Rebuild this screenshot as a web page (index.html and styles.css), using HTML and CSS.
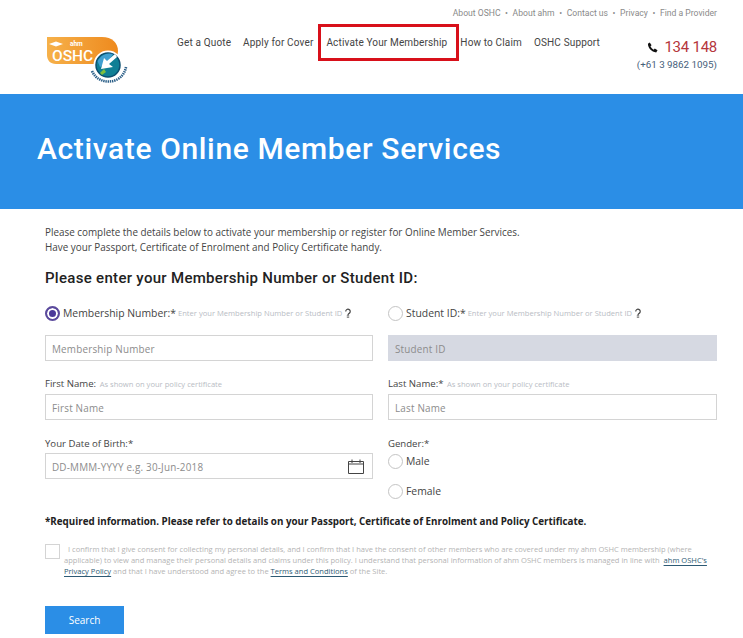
FILE: index.html
```html
<!DOCTYPE html>
<html lang="en">
<head>
<meta charset="utf-8">
<title>Activate Online Member Services</title>
<link rel="stylesheet" href="styles.css">
</head>
<body>
<header class="site-header">
  <nav class="top-links">
    <a>About OSHC</a><span>•</span><a>About ahm</a><span>•</span><a>Contact us</a><span>•</span><a>Privacy</a><span>•</span><a>Find a Provider</a>
  </nav>
  <div class="main-row">
    <svg class="logo" viewBox="0 0 84 48" width="84" height="48" aria-label="ahm OSHC">
      <defs>
        <linearGradient id="og" x1="0" x2="1" y1="0" y2="0">
          <stop offset="0" stop-color="#f6b14a"/><stop offset="1" stop-color="#ee8a1e"/>
        </linearGradient>
      </defs>
      <path d="M1 0H56C66 0 72 6 72 14C72 21 66 27 58 27H10C4 27 1 23 1 18Z" fill="url(#og)"/>
      <text x="24" y="8.500" class="logo-ahm">ahm</text>
      <text x="6" y="24" class="logo-oshc">OSHC</text>
      <path d="M3 7L10 4.500L17 7L10 9.500Z" fill="#fff"/>
      <circle cx="62" cy="28" r="14.500" fill="#fff"/>
      <circle cx="62" cy="28" r="12" fill="#0f7f95" stroke="#0b4f70" stroke-width="1.500"/>
      <path d="M51.500 24C55 18 61 15 67 17L61 26L54 30Z" fill="#3f9fd0"/>
      <path d="M54 36L58 32L60 35L56 38Z" fill="#7fbf3f"/>
      <path d="M71 20L63 27L67 30L55 32L58 21L61 24L69 17Z" fill="#fff"/>
      <path d="M46 34C50 43 60 47 70 43C75 41 79 36 80 30" fill="none" stroke="#2b5f88" stroke-width="2.600" stroke-dasharray="1.400 .8"/>
    </svg>
    <nav class="main-nav">
      <a>Get a Quote</a>
      <a>Apply for Cover</a>
      <a class="marked">Activate Your Membership</a>
      <a>How to Claim</a>
      <a>OSHC Support</a>
    </nav>
    <div class="phone">
      <div class="phone-main">
        <svg viewBox="0 0 24 24" width="11" height="11"><path d="M6 1L2 4C2 13 10 22 20 23L23 18L17 14L14.500 17C11.500 15.500 9 12.500 7.500 9.500L10 7Z" fill="#111"/></svg>
        <span>134 148</span>
      </div>
      <div class="phone-alt">(+61 3 9862 1095)</div>
    </div>
  </div>
</header>

<section class="hero"><h1>Activate Online Member Services</h1></section>

<main class="content">
  <p class="intro">Please complete the details below to activate your membership or register for Online Member Services.<br>Have your Passport, Certificate of Enrolment and Policy Certificate handy.</p>
  <h2>Please enter your Membership Number or Student ID:</h2>

  <div class="form-grid">
    <div class="field first-row">
      <div class="radio-line">
        <span class="radio checked"></span>
        <span class="radio-label">Membership Number:*</span>
        <small>Enter your Membership Number or Student ID</small>
        <svg class="hint" viewBox="0 0 10 12" width="8" height="10"><path d="M2.200 4.200A2.800 2.800 0 1 1 7 6C6 7 5 7.300 5 8.500" fill="none" stroke="#444" stroke-width="1.500"/><path d="M3.500 9.500H6.500M3.500 11.300H6.500" stroke="#444"/></svg>
      </div>
      <div class="input">Membership Number</div>
    </div>
    <div class="field first-row">
      <div class="radio-line">
        <span class="radio"></span>
        <span class="radio-label">Student ID:*</span>
        <small>Enter your Membership Number or Student ID</small>
        <svg class="hint" viewBox="0 0 10 12" width="8" height="10"><path d="M2.200 4.200A2.800 2.800 0 1 1 7 6C6 7 5 7.300 5 8.500" fill="none" stroke="#444" stroke-width="1.500"/><path d="M3.500 9.500H6.500M3.500 11.300H6.500" stroke="#444"/></svg>
      </div>
      <div class="input disabled">Student ID</div>
    </div>

    <div class="field name-row">
      <div class="label">First Name: <small>As shown on your policy certificate</small></div>
      <div class="input">First Name</div>
    </div>
    <div class="field name-row">
      <div class="label">Last Name:* <small>As shown on your policy certificate</small></div>
      <div class="input">Last Name</div>
    </div>

    <div class="field last-row">
      <div class="label">Your Date of Birth:*</div>
      <div class="input date">
        <span>DD-MMM-YYYY e.g. 30-Jun-2018</span>
        <svg viewBox="0 0 16 15" width="16" height="15"><path d="M.5 2.500H15.500V14.500H.5ZM.5 5H15.500M4 .5V4M12 .5V4" fill="none" stroke="#444"/></svg>
      </div>
    </div>
    <div class="field last-row">
      <div class="label gender">Gender:*</div>
      <div class="radio-line compact"><span class="radio"></span><span class="radio-label">Male</span></div>
      <div class="radio-line compact"><span class="radio"></span><span class="radio-label">Female</span></div>
    </div>
  </div>

  <p class="required">*Required information. Please refer to details on your Passport, Certificate of Enrolment and Policy Certificate.</p>

  <div class="consent">
    <span class="checkbox"></span>
    <p>I confirm that I give consent for collecting my personal details, and I confirm that I have the consent of other members who are covered under my ahm OSHC membership (where applicable) to view and manage their personal details and claims under this policy. I understand that personal information of ahm OSHC members is managed in line with &nbsp;<a>ahm OSHC's</a> <a>Privacy Policy</a> and that I have understood and agree to the <a>Terms and Conditions</a> of the Site.</p>
  </div>

  <button class="search" type="button">Search</button>
</main>
</body>
</html>
```

FILE: styles.css
```css
* { box-sizing: border-box; }
html, body { margin: 0; padding: 0; }
body {
  width: 743px;
  height: 638px;
  overflow: hidden;
  background: #fff;
  color: #333;
  font-family: "Open Sans", "Noto Sans", sans-serif;
}
.site-header {
  height: 94px;
  padding: 8px 26px 0 46px;
}
.top-links {
  display: flex;
  justify-content: flex-end;
  gap: 4.600px;
  height: 11px;
  font-family: Roboto, sans-serif;
  font-size: 8.600px;
  line-height: 11px;
  color: #8a8a8a;
}
.main-row {
  display: flex;
  align-items: flex-start;
  margin-top: 5px;
}
.logo { margin-top: 13px; flex: none; }
.main-nav {
  display: flex;
  align-items: center;
  flex: none;
  margin-left: 47px;
  font-family: Roboto, sans-serif;
  font-size: 10px;
  letter-spacing: .15px;
  color: #444;
}
.main-nav a { white-space: nowrap; margin-right: 12px; line-height: 37px; }
.main-nav .marked {
  border: 3px solid #d8101a;
  height: 37px;
  line-height: 31px;
  padding: 0 9px 0 5px;
  margin-left: -7px;
  margin-right: 0;
}
.main-nav .marked + a { margin-left: 1px; margin-right: 12px; }
.phone {
  flex: none;
  margin-left: auto;
  margin-top: 14px;
  text-align: right;
  white-space: nowrap;
  font-family: Roboto, sans-serif;
}
.phone-main {
  display: flex;
  justify-content: flex-end;
  align-items: center;
  gap: 6px;
  font-size: 15px;
  line-height: 18px;
  letter-spacing: -.25px;
  color: #b5363c;
}
.phone-alt {
  margin-top: 2px;
  font-size: 9.800px;
  line-height: 14px;
  color: #46607a;
}
.hero {
  height: 115px;
  background: #2b8ee6;
  padding: 36px 37px 0;
}
.hero h1 {
  margin: 0;
  font-family: Roboto, sans-serif;
  font-size: 30px;
  font-weight: 500;
  line-height: 38px;
  letter-spacing: .63px;
  color: #fff;
}
.content { padding: 16px 26px 0 45px; }
.intro {
  margin: 0;
  font-size: 9.900px;
  line-height: 15px;
  color: #444;
}
h2 {
  margin: 13px 0 0;
  font-family: Roboto, sans-serif;
  font-size: 15px;
  font-weight: 500;
  line-height: 20px;
  letter-spacing: .3px;
  color: #222;
}
.form-grid {
  display: grid;
  grid-template-columns: 328px 329px;
  column-gap: 15px;
  margin-top: 15px;
}
.field { display: flex; flex-direction: column; }
.field.first-row { height: 73px; }
.field.name-row { height: 60px; }
.field.last-row { height: 77px; }
.radio-line {
  display: flex;
  align-items: center;
  height: 20px;
  gap: 2px;
  white-space: nowrap;
}
.first-row .radio-line { margin-bottom: 12px; }
.radio-line.compact { height: 18px; margin-bottom: 12px; }
.radio {
  flex: none;
  width: 15px;
  height: 15px;
  border-radius: 50%;
  border: 1px solid #c4c4c4;
  background: #fff;
}
.radio.checked {
  border: 2px solid #5b4a9c;
  box-shadow: inset 0 0 0 2px #fff;
  background: #4b3a9a;
}
.radio-label { margin-left: 1px; font-size: 10.400px; color: #444; }
small { font-size: 7.600px; color: #b8bcc4; }
.label small { margin-left: 1px; }
.label {
  height: 16px;
  margin-bottom: 2px;
  font-size: 9.600px;
  line-height: 16px;
  color: #444;
  white-space: nowrap;
}
.label.gender { margin-bottom: 0; }
.input {
  flex: none;
  display: flex;
  align-items: center;
  height: 26px;
  padding: 1px 6px 0;
  border: 1px solid #d4d4d4;
  background: #fff;
  font-size: 9.900px;
  letter-spacing: .2px;
  color: #8c8c8c;
}
.input.disabled { background: #d6d9e2; border-color: #d6d9e2; }
.input.date { justify-content: space-between; margin-top: -1px; padding-right: 8px; }
.required {
  margin: 2px 0 0;
  font-size: 9.800px;
  font-weight: 700;
  line-height: 14px;
  color: #222;
}
.consent {
  display: flex;
  gap: 4px;
  margin-top: 15px;
}
.checkbox {
  flex: none;
  width: 15px;
  height: 15px;
  border: 1px solid #d4d4d4;
  background: #fff;
}
.consent p {
  margin: 0;
  font-size: 7.550px;
  line-height: 11px;
  text-indent: 4px;
  color: #b4b4b4;
}
.consent a {
  color: #2d5a74;
  text-decoration: underline;
  text-underline-offset: 1.500px;
}
.search {
  display: block;
  width: 79px;
  height: 28px;
  margin-top: 29px;
  border: 0;
  background: #2b8ee6;
  color: #fff;
  font-family: "Open Sans", sans-serif;
  font-size: 10px;
}
.logo-ahm { font: 700 6.500px Roboto, sans-serif; fill: #fff; }
.logo-oshc { font: 500 15.500px Roboto, sans-serif; fill: #fff; }
```
